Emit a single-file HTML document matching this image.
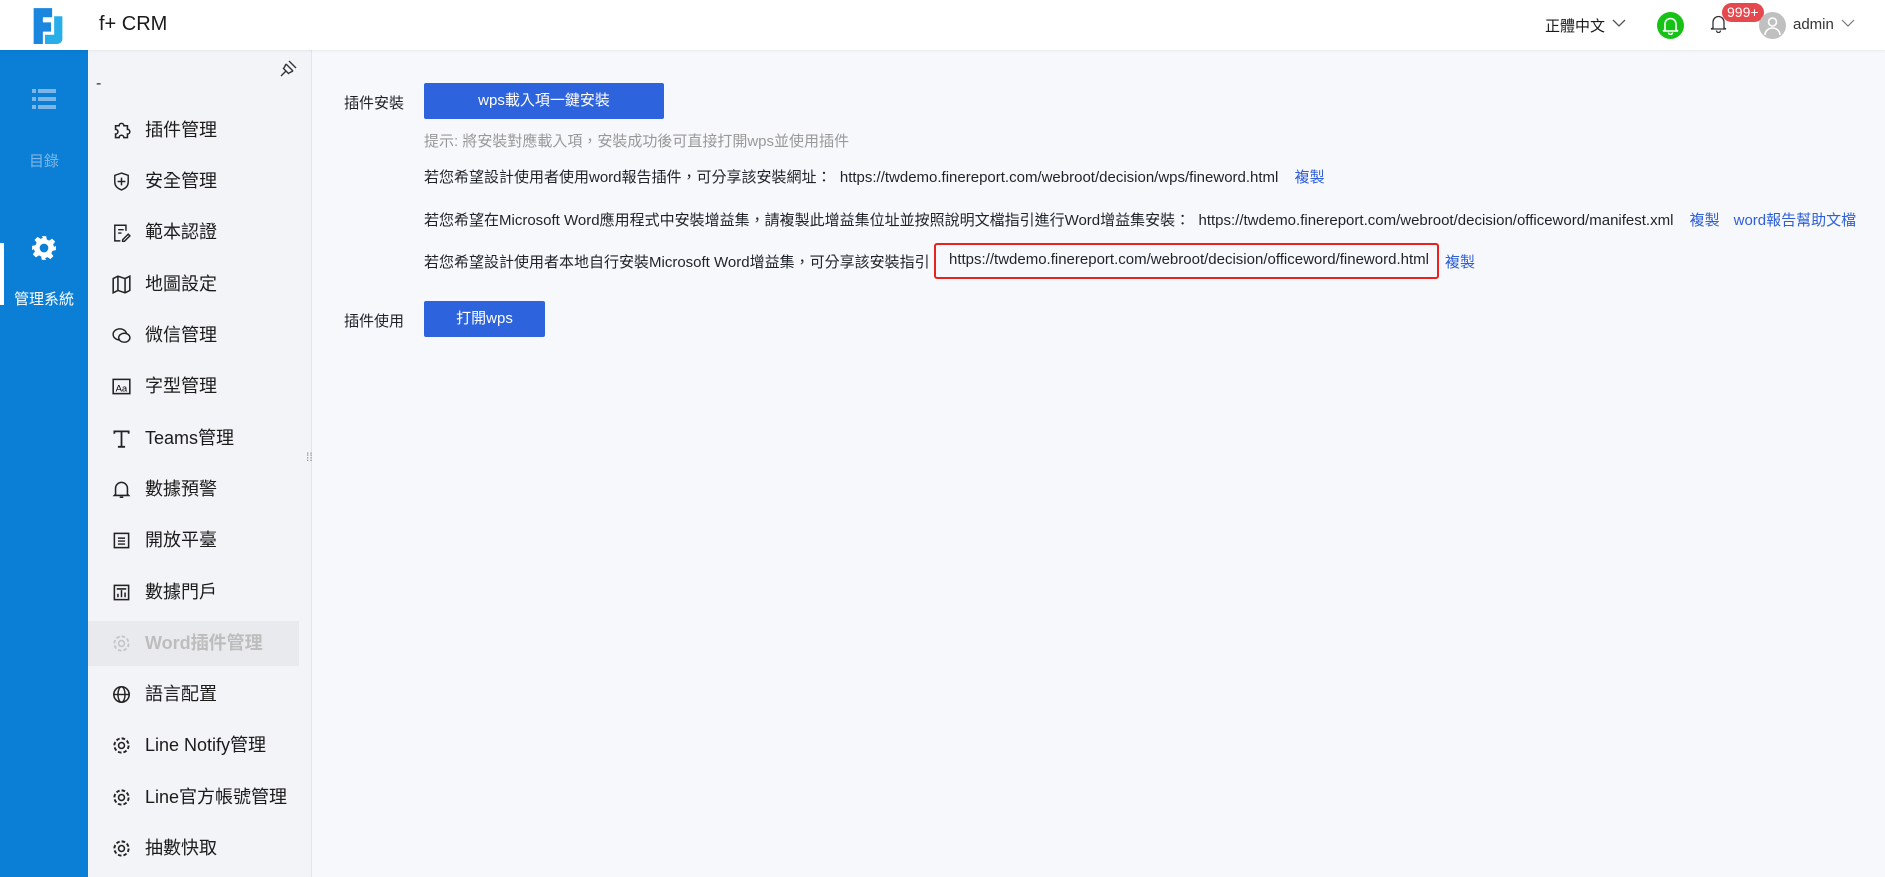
<!DOCTYPE html>
<html><head><meta charset="utf-8">
<style>
*{margin:0;padding:0;box-sizing:border-box}
body{width:1885px;height:877px;overflow:hidden;background:#f7f8fc;font-family:"Liberation Sans","Noto Sans CJK TC",sans-serif;color:#1f2d3d;position:relative}
.hdr{position:absolute;left:0;top:0;width:1885px;height:50px;background:#fff;box-shadow:0 1px 3px rgba(0,0,0,.06);z-index:2}
.rail{position:absolute;left:0;top:50px;width:88px;height:827px;background:#0a7fd5}
.side{position:absolute;left:88px;top:50px;width:224px;height:827px;background:#f3f4f8;border-right:1px solid #e3e5ea}
.mi{position:absolute;left:0;width:211px;height:45px;font-size:18px;line-height:45px;padding-left:57px;color:#1b1b1b}
.mi svg{position:absolute;left:24px;top:13px}
.t{position:absolute;font-size:15px;white-space:nowrap;color:#1f2329}
.lnk{color:#2f5fd8}
.btn{position:absolute;background:#2d63dc;color:#fff;font-size:15px;text-align:center;border-radius:2px}
</style></head><body>
<div class="hdr">
 <svg style="position:absolute;left:30px;top:5px" width="36" height="40" viewBox="0 0 30 39"><path d="M1 3h18v9H10v5h8v9h-8v12H1z" fill="#1a86de"/><path d="M21 11h8v22a5 5 0 0 1-5 5h-12v-9h9z" fill="#27aee9"/><path d="M24 1v9M19.5 5.5h9" stroke="#fff" stroke-width="2"/></svg>
 <div style="position:absolute;left:99px;top:13px;font-size:20px;color:#1b1b1b">f+ CRM</div>
 <div style="position:absolute;left:1545px;top:15px;font-size:15px;color:#1b1b1b">正體中文</div>
 <svg style="position:absolute;left:1612px;top:19px" width="14" height="9"><path d="M1 1l6 6 6-6" stroke="#555" fill="none" stroke-width="1.3"/></svg>
 <div style="position:absolute;left:1657px;top:12px;width:27px;height:27px;border-radius:50%;background:#16c216"></div>
 <svg style="position:absolute;left:1662px;top:16px" width="17" height="19"><path d="M3 14V8a5.5 5.5 0 0 1 11 0v6l2 1H1z M6.5 16.5a2 2 0 0 0 4 0" stroke="#fff" fill="none" stroke-width="1.6"/></svg>
 <svg style="position:absolute;left:1710px;top:14px" width="17" height="19"><path d="M3 14V8a5.5 5.5 0 0 1 11 0v6l2 1H1z M6.5 16.5a2 2 0 0 0 4 0" stroke="#333" fill="none" stroke-width="1.3"/></svg>
 <div style="position:absolute;left:1722px;top:3px;height:19px;padding:0 5px;border-radius:10px;background:#e5484d;color:#fff;font-size:14px;line-height:19px">999+</div>
 <div style="position:absolute;left:1759px;top:12px;width:27px;height:27px;border-radius:50%;background:#c0c0c0"></div>
 <svg style="position:absolute;left:1759px;top:12px" width="27" height="27"><circle cx="13.5" cy="10" r="4" stroke="#fff" fill="none" stroke-width="1.6"/><path d="M6 23a7.5 7 0 0 1 15 0" stroke="#fff" fill="none" stroke-width="1.6"/></svg>
 <div style="position:absolute;left:1793px;top:16px;font-size:15px;color:#333">admin</div>
 <svg style="position:absolute;left:1841px;top:19px" width="14" height="9"><path d="M1 1l6 6 6-6" stroke="#777" fill="none" stroke-width="1.2"/></svg>
</div>
<div class="rail">
 <svg style="position:absolute;left:32px;top:39px" width="24" height="20"><g fill="#7eb6e8"><rect x="0" y="0" width="4" height="4"/><rect x="6" y="0" width="18" height="4"/><rect x="0" y="8" width="4" height="4"/><rect x="6" y="8" width="18" height="4"/><rect x="0" y="16" width="4" height="4"/><rect x="6" y="16" width="18" height="4"/></g></svg>
 <div style="position:absolute;left:0;width:88px;top:100px;text-align:center;color:#7eb6e8;font-size:15px">目錄</div>
 <div style="position:absolute;left:0;top:193px;width:4px;height:62px;background:#fff"></div>
 <svg style="position:absolute;left:31px;top:185px" width="26" height="26" viewBox="0 0 24 24"><path fill="#fff" d="M10 1h4l.6 3.2 2.2 1 2.7-1.9 2.8 2.8-1.9 2.7 1 2.2L23 10v4l-3.2.6-1 2.2 1.9 2.7-2.8 2.8-2.7-1.9-2.2 1L14 23h-4l-.6-3.2-2.2-1-2.7 1.9-2.8-2.8 1.9-2.7-1-2.2L1 14v-4l3.2-.6 1-2.2L3.3 4.5l2.8-2.8 2.7 1.9 2.2-1z"/><circle cx="12" cy="12" r="4" fill="#0a7fd5"/></svg>
 <div style="position:absolute;left:0;width:88px;top:238px;text-align:center;color:#fff;font-size:15px">管理系統</div>
</div>
<div class="side">
 <svg style="position:absolute;left:191px;top:10px" width="18" height="18"><path d="M2 16l5-5M4 8l6 6M7 4l7 7M10 1l7 7M7 4L5 8M14 11l-4 2" stroke="#333" fill="none" stroke-width="1.4"/></svg>
 <div style="position:absolute;left:8px;top:25px;font-size:16px">-</div>
 <div class="mi" style="top:58px"><svg width="19" height="19" viewBox="0 0 16 16"><path d="M3 4h3a2 2 0 0 1 4 0h3v3a2 2 0 0 1 0 4v3h-3a2 2 0 0 0-4 0H3v-3a2 2 0 0 0 0-4z" stroke="#222" fill="none" stroke-width="1.3"/></svg>插件管理</div>
 <div class="mi" style="top:109px"><svg width="19" height="19" viewBox="0 0 16 17"><path d="M8 1l6 2v6c0 4-3 6-6 7-3-1-6-3-6-7V3z M8 5v7M4.5 8.5h7" stroke="#222" fill="none" stroke-width="1.3"/></svg>安全管理</div>
 <div class="mi" style="top:160px"><svg width="19" height="19" viewBox="0 0 16 17"><path d="M12 7V2H2v14h5M5 6h5M5 9h3M9 15l5-5 1.5 1.5-5 5H9z" stroke="#222" fill="none" stroke-width="1.3"/></svg>範本認證</div>
 <div class="mi" style="top:212px"><svg width="19" height="19" viewBox="0 0 16 16"><path d="M1 3l4-2 6 2 4-2v12l-4 2-6-2-4 2z M5 1v12M11 3v12" stroke="#222" fill="none" stroke-width="1.3"/></svg>地圖設定</div>
 <div class="mi" style="top:263px"><svg width="19" height="19" viewBox="0 0 17 16"><ellipse cx="7" cy="7" rx="6" ry="5" stroke="#222" fill="none" stroke-width="1.3"/><ellipse cx="11" cy="10" rx="5" ry="4" stroke="#222" fill="#f3f4f8" stroke-width="1.3"/></svg>微信管理</div>
 <div class="mi" style="top:314px"><svg width="19" height="19" viewBox="0 0 16 16"><rect x="1" y="2" width="14" height="12" stroke="#222" fill="none" stroke-width="1.3"/><text x="3" y="12" font-size="8" font-family="Liberation Sans">Aa</text></svg>字型管理</div>
 <div class="mi" style="top:366px"><svg width="19" height="19" viewBox="0 0 16 16"><path d="M2 4V2h12v2M8 2v13M5 15h6" stroke="#222" fill="none" stroke-width="1.5"/></svg>Teams管理</div>
 <div class="mi" style="top:417px"><svg width="19" height="19" viewBox="0 0 16 16"><path d="M3 12V7a5 5 0 0 1 10 0v5l1 1H2z M6.5 14.5h3" stroke="#222" fill="none" stroke-width="1.3"/></svg>數據預警</div>
 <div class="mi" style="top:468px"><svg width="19" height="19" viewBox="0 0 16 16"><rect x="2" y="2" width="12" height="12" stroke="#222" fill="none" stroke-width="1.3"/><path d="M5 6h6M5 8.5h6M5 11h6" stroke="#222" stroke-width="1.2"/></svg>開放平臺</div>
 <div class="mi" style="top:520px"><svg width="19" height="19" viewBox="0 0 16 16"><rect x="2" y="2" width="12" height="12" stroke="#222" fill="none" stroke-width="1.3"/><path d="M5 12V9M8 12V6M11 12V8M4 5h8" stroke="#222" stroke-width="1.3"/></svg>數據門戶</div>
 <div class="mi" style="top:571px;background:#e9eaee;color:#bdbdbd;font-weight:bold"><svg width="19" height="19" viewBox="0 0 16 16"><circle cx="8" cy="8" r="6" stroke="#c4c4c4" fill="none" stroke-width="1.5" stroke-dasharray="3 1.7"/><circle cx="8" cy="8" r="2.5" stroke="#c4c4c4" fill="none" stroke-width="1.3"/></svg>Word插件管理</div>
 <div class="mi" style="top:622px"><svg width="19" height="19" viewBox="0 0 16 16"><circle cx="8" cy="8" r="6.5" stroke="#222" fill="none" stroke-width="1.3"/><ellipse cx="8" cy="8" rx="3" ry="6.5" stroke="#222" fill="none" stroke-width="1.2"/><path d="M1.5 8h13" stroke="#222" stroke-width="1.2"/></svg>語言配置</div>
 <div class="mi" style="top:673px"><svg width="19" height="19" viewBox="0 0 16 16"><circle cx="8" cy="8" r="6" stroke="#222" fill="none" stroke-width="1.6" stroke-dasharray="3 1.7"/><circle cx="8" cy="8" r="2.5" stroke="#222" fill="none" stroke-width="1.3"/></svg>Line Notify管理</div>
 <div class="mi" style="top:725px"><svg width="19" height="19" viewBox="0 0 16 16"><circle cx="8" cy="8" r="6" stroke="#222" fill="none" stroke-width="1.6" stroke-dasharray="3 1.7"/><circle cx="8" cy="8" r="2.5" stroke="#222" fill="none" stroke-width="1.3"/></svg>Line官方帳號管理</div>
 <div class="mi" style="top:776px"><svg width="19" height="19" viewBox="0 0 16 16"><circle cx="8" cy="8" r="6" stroke="#222" fill="none" stroke-width="1.6" stroke-dasharray="3 1.7"/><circle cx="8" cy="8" r="2.5" stroke="#222" fill="none" stroke-width="1.3"/></svg>抽數快取</div>
 <div style="position:absolute;left:218px;top:404px;color:#888;font-size:12px;line-height:6px">⁞⁞</div>
</div>
<div class="t" style="left:344px;top:92px">插件安裝</div>
<div class="btn" style="left:424px;top:83px;width:240px;height:36px;line-height:36px">wps載入項一鍵安裝</div>
<div class="t" style="left:424px;top:130px;color:#999">提示: 將安裝對應載入項，安裝成功後可直接打開wps並使用插件</div>
<div class="t" style="left:424px;top:166px">若您希望設計使用者使用word報告插件，可分享該安裝網址：&nbsp; https://twdemo.finereport.com/webroot/decision/wps/fineword.html <span class="lnk" style="margin-left:12px">複製</span></div>
<div class="t" style="left:424px;top:209px">若您希望在Microsoft Word應用程式中安裝增益集，請複製此增益集位址並按照說明文檔指引進行Word增益集安裝：&nbsp; https://twdemo.finereport.com/webroot/decision/officeword/manifest.xml <span class="lnk" style="margin-left:12px">複製</span><span class="lnk" style="margin-left:14px">word報告幫助文檔</span></div>
<div class="t" style="left:424px;top:251px">若您希望設計使用者本地自行安裝Microsoft Word增益集，可分享該安裝指引</div>
<div style="position:absolute;left:934px;top:243px;width:505px;height:36px;border:2px solid #e8231f;border-radius:3px"></div>
<div class="t" style="left:949px;top:251px">https://twdemo.finereport.com/webroot/decision/officeword/fineword.html</div>
<div class="t lnk" style="left:1445px;top:251px">複製</div>
<div class="t" style="left:344px;top:310px">插件使用</div>
<div class="btn" style="left:424px;top:301px;width:121px;height:36px;line-height:36px">打開wps</div>
</body></html>
